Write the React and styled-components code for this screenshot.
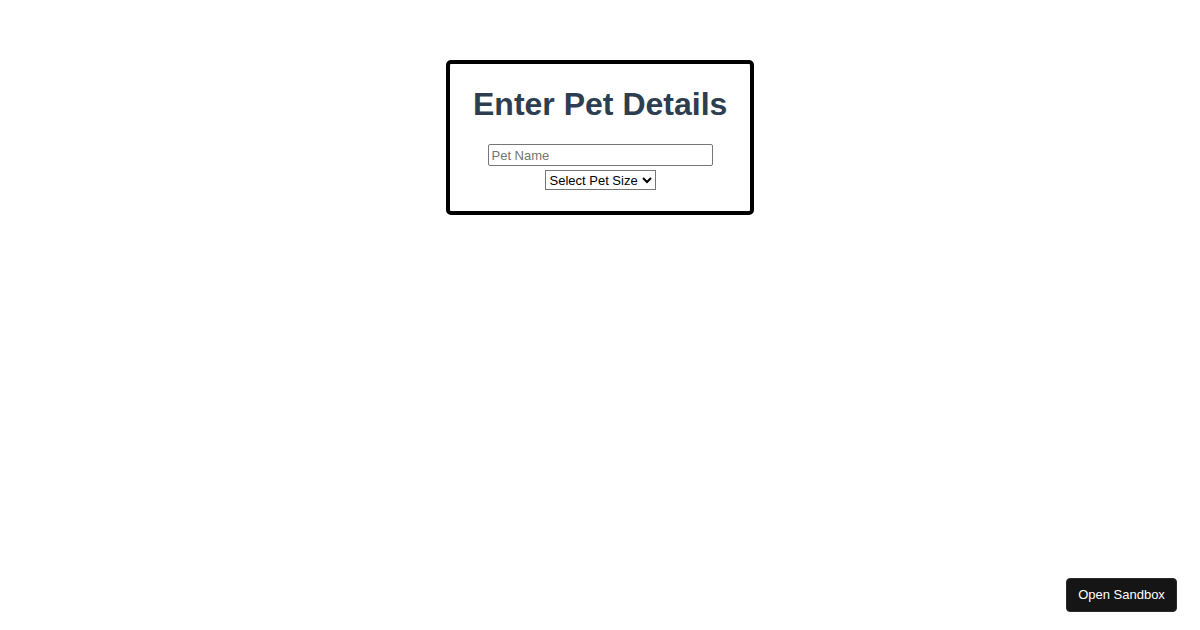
import styled, { createGlobalStyle } from "styled-components";

const GlobalStyle = createGlobalStyle`
  html, body {
    margin: 0;
    padding: 0;
    background: #fff;
  }
  body {
    font-family: "Liberation Sans", Arial, sans-serif;
  }
`;

function App() {
  return (
    <>
      <GlobalStyle />
      <Page>
        <Card>
          <Title>Enter Pet Details</Title>
          <Fields>
            <NameInput type="text" placeholder="Pet Name" />
            <SizeSelect defaultValue="">
              <option value="">Select Pet Size</option>
              <option value="small">Small</option>
              <option value="medium">Medium</option>
              <option value="large">Large</option>
            </SizeSelect>
          </Fields>
        </Card>
      </Page>
      <SandboxButton type="button">Open Sandbox</SandboxButton>
    </>
  );
}

export default App;

const Page = styled.div`
  display: flex;
  justify-content: center;
  padding-top: 60px;
  min-height: 100vh;
  box-sizing: border-box;
`;

const Card = styled.div`
  box-sizing: border-box;
  width: 308px;
  height: 155px;
  padding: 0 23px 21px;
  border: 4px solid #000;
  border-radius: 5px;
  text-align: center;
`;

const Title = styled.h1`
  margin: 22px 0 21px;
  font-family: "Liberation Sans", Arial, sans-serif;
  font-size: 32px;
  font-weight: bold;
  line-height: 37px;
  color: #2c3e50;
  white-space: nowrap;
`;

const Fields = styled.div`
  display: flex;
  flex-direction: column;
  align-items: center;
  gap: 4px;
`;

const NameInput = styled.input`
  box-sizing: border-box;
  width: 225px;
  height: 22px;
  padding: 1px 3px;
  border: 1px solid #767676;
  border-radius: 2px;
  font-family: "Liberation Sans", Arial, sans-serif;
  font-size: 13px;
  color: #000;

  &::placeholder {
    color: #757575;
  }
`;

const SizeSelect = styled.select`
  box-sizing: border-box;
  height: 20px;
  font-family: "Liberation Sans", Arial, sans-serif;
  font-size: 13px;
  color: #000;
  border: 1px solid #767676;
  border-radius: 0;
  background: #fff;
`;

const SandboxButton = styled.button`
  position: fixed;
  right: 23px;
  bottom: 18px;
  width: 111px;
  height: 34px;
  padding: 0 0 1px;
  background: #151515;
  color: #fff;
  border: 1px solid #2a2a2a;
  border-radius: 4px;
  font-family: "Liberation Sans", Arial, sans-serif;
  font-size: 13px;
  cursor: pointer;
`;
